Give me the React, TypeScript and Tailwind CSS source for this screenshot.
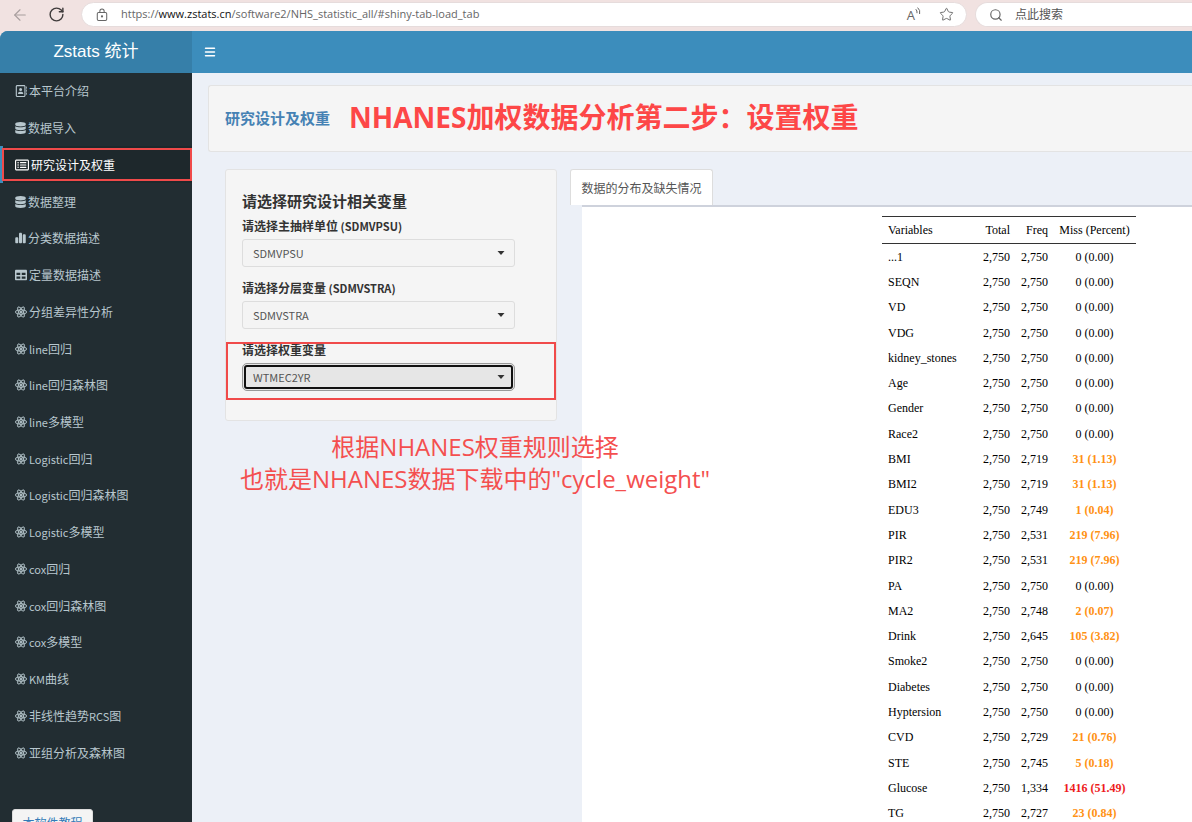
import type { ReactNode } from "react";
import { ArrowLeft, RotateCw, Search, Star } from "lucide-react";
import { FaDatabase, FaReact, FaTable } from "react-icons/fa";
import { FaBars, FaChartSimple, FaRegAddressBook, FaRegRectangleList } from "react-icons/fa6";
import { clsx } from "clsx";

const ATOM = <FaReact className="h-3 w-3" stroke="currentColor" strokeWidth={18} />;

const NAV_ITEMS: { name: string; icon: ReactNode; active?: boolean }[] = [
  { name: "本平台介绍", icon: <FaRegAddressBook className="h-3 w-3" /> },
  { name: "数据导入", icon: <FaDatabase className="h-3 w-[11px]" /> },
  { name: "研究设计及权重", icon: <FaRegRectangleList className="h-[14px] w-[14px]" />, active: true },
  { name: "数据整理", icon: <FaDatabase className="h-3 w-[11px]" /> },
  { name: "分类数据描述", icon: <FaChartSimple className="h-3 w-[11px]" /> },
  { name: "定量数据描述", icon: <FaTable className="h-3 w-3" /> },
  { name: "分组差异性分析", icon: ATOM },
  { name: "line回归", icon: ATOM },
  { name: "line回归森林图", icon: ATOM },
  { name: "line多模型", icon: ATOM },
  { name: "Logistic回归", icon: ATOM },
  { name: "Logistic回归森林图", icon: ATOM },
  { name: "Logistic多模型", icon: ATOM },
  { name: "cox回归", icon: ATOM },
  { name: "cox回归森林图", icon: ATOM },
  { name: "cox多模型", icon: ATOM },
  { name: "KM曲线", icon: ATOM },
  { name: "非线性趋势RCS图", icon: ATOM },
  { name: "亚组分析及森林图", icon: ATOM },
];

const ROWS = [
  ["...1", "2,750", "0 (0.00)"],
  ["SEQN", "2,750", "0 (0.00)"],
  ["VD", "2,750", "0 (0.00)"],
  ["VDG", "2,750", "0 (0.00)"],
  ["kidney_stones", "2,750", "0 (0.00)"],
  ["Age", "2,750", "0 (0.00)"],
  ["Gender", "2,750", "0 (0.00)"],
  ["Race2", "2,750", "0 (0.00)"],
  ["BMI", "2,719", "31 (1.13)"],
  ["BMI2", "2,719", "31 (1.13)"],
  ["EDU3", "2,749", "1 (0.04)"],
  ["PIR", "2,531", "219 (7.96)"],
  ["PIR2", "2,531", "219 (7.96)"],
  ["PA", "2,750", "0 (0.00)"],
  ["MA2", "2,748", "2 (0.07)"],
  ["Drink", "2,645", "105 (3.82)"],
  ["Smoke2", "2,750", "0 (0.00)"],
  ["Diabetes", "2,750", "0 (0.00)"],
  ["Hyptersion", "2,750", "0 (0.00)"],
  ["CVD", "2,729", "21 (0.76)"],
  ["STE", "2,745", "5 (0.18)"],
  ["Glucose", "1,334", "1416 (51.49)"],
  ["TG", "2,727", "23 (0.84)"],
];

function missClass(miss: string) {
  if (miss.startsWith("0 ")) return "";
  return miss.startsWith("1416") ? "font-bold text-[#ee1c1c]" : "font-bold text-[#ff9214]";
}

// latin runs are set smaller than the chinese around them
function MixedText({ text }: { text: string }) {
  return (
    <span>
      {text.split(/([\x20-\x7e]+)/).map((run, i) =>
        i % 2 ? (
          <span key={i} className="text-[11px]">
            {run}
          </span>
        ) : (
          run
        ),
      )}
    </span>
  );
}

function BrowserBar() {
  return (
    <div className="flex h-[31px] shrink-0 items-start gap-2 bg-[#f1e2e1] pt-[2px] font-['Open_Sans','Noto_Sans_CJK_SC',sans-serif] text-xs text-[#666]">
      <div className="flex h-[25px] w-[73px] items-center gap-[19px] pl-[11px]">
        <button aria-label="返回" className="text-[#a89e9e]">
          <ArrowLeft className="h-[18px] w-[18px]" strokeWidth={1.5} />
        </button>
        <button aria-label="刷新" className="text-[#3f3b3b]">
          <RotateCw className="h-[17px] w-[17px]" strokeWidth={2} />
        </button>
      </div>
      <div className="flex h-[25px] flex-1 items-center rounded-full border border-[#e6dcdc] bg-white pr-3 pl-[14px]">
        <svg viewBox="0 0 14 16" className="h-[14px] w-3" fill="none" stroke="#666" strokeWidth="1.2">
          <rect x="1.5" y="5" width="11" height="9.5" rx="1.5" />
          <path d="M4.5 5V3.5a2.5 2.5 0 0 1 5 0V5" />
          <circle cx="7" cy="9.7" r="0.7" fill="#666" />
        </svg>
        <span className="ml-[13px] flex-1 text-[11px] whitespace-nowrap">
          https://<span className="text-[#111]">www.zstats.cn</span>/software2/NHS_statistic_all/#shiny-tab-load_tab
        </span>
        <button aria-label="朗读此页内容" className="flex items-start">
          <span className="text-[13px] leading-4">A</span>
          <svg viewBox="0 0 6 8" className="h-2 w-[6px]" fill="none" stroke="#666">
            <path d="M0.8 2.2q1.6 1.6 1.2 4M2.6 0.6q3 2.6 2 6.4" />
          </svg>
        </button>
        <button aria-label="收藏" className="ml-[18px]">
          <Star className="h-[15px] w-[15px]" strokeWidth={1.5} />
        </button>
      </div>
      <label className="flex h-[25px] w-[217px] items-center gap-3 rounded-l-full border border-r-0 border-[#e6dcdc] bg-white pl-[13px]">
        <Search className="h-[14px] w-[14px] shrink-0" strokeWidth={2} />
        <input aria-label="搜索" placeholder="点此搜索" className="w-full outline-none placeholder:text-[#555]" />
      </label>
    </div>
  );
}

function Sidebar() {
  return (
    <nav className="w-48 shrink-0 bg-[#222d32] text-xs text-[#b8c7ce]">
      <ul className="flex h-[698px] flex-col">
        {NAV_ITEMS.map((item) => (
          <li key={item.name} className="relative flex-1">
            <a
              href="#shiny-tab-load_tab"
              className={clsx(
                "flex h-full items-center gap-[2px] border-l-[3px] pl-3 whitespace-nowrap",
                item.active ? "border-[#3c8dbc] bg-[#1e282c] text-white" : "border-transparent",
              )}
            >
              {item.icon}
              <MixedText text={item.name} />
            </a>
            {item.active && (
              <span className="pointer-events-none absolute inset-y-[2px] right-0 left-[2px] border-2 border-[#f04a4a]" />
            )}
          </li>
        ))}
      </ul>
      <button className="mt-[38px] ml-3 h-7 w-[81px] rounded-[3px] border border-[#ddd] bg-[#f4f4f4] text-[#337ab7]">
        本软件教程
      </button>
    </nav>
  );
}

function VariableSelect({ id, label, value, focused }: { id: string; label: string; value: string; focused?: boolean }) {
  return (
    <div>
      <label htmlFor={id} className="block h-[22px] text-xs leading-[18px] font-bold">
        <MixedText text={label} />
      </label>
      <div className="relative w-[273px]">
        <select
          id={id}
          className={clsx(
            "block h-7 w-full appearance-none border pl-[10px] text-[11px] text-[#555]",
            focused
              ? "rounded-[5px] border-[#999] bg-[#e6e6e6] outline-2 -outline-offset-4 outline-[#111]"
              : "rounded-[3px] border-[#ddd] bg-[#f4f4f4] outline-none",
          )}
        >
          <option>{value}</option>
        </select>
        <svg viewBox="0 0 8 4" className="pointer-events-none absolute top-3 right-[10px] h-1 w-2">
          <path d="M0.5 0h7L4 4z" fill="#333" />
        </svg>
      </div>
    </div>
  );
}

function DesignPanel() {
  return (
    <section className="relative h-[252px] w-[332px] shrink-0 rounded-[3px] border border-[#e3e3e3] bg-[#f5f5f5] px-4 pt-[19px]">
      <h4 className="mb-1 text-[15px] leading-6 font-bold">请选择研究设计相关变量</h4>
      <div className="flex flex-col gap-3">
        <VariableSelect id="psu" label="请选择主抽样单位 (SDMVPSU)" value="SDMVPSU" />
        <VariableSelect id="stra" label="请选择分层变量 (SDMVSTRA)" value="SDMVSTRA" />
        <VariableSelect id="weight" label="请选择权重变量" value="WTMEC2YR" focused />
      </div>
      <span className="pointer-events-none absolute inset-x-0 top-[172px] h-[58px] border-2 border-[#f04a4a]" />
      <p className="absolute top-[261px] left-[14px] text-center font-['Open_Sans','Noto_Sans_CJK_SC',sans-serif] text-2xl leading-8 whitespace-nowrap text-[#f44f4f]">
        根据NHANES权重规则选择
        <br />
        也就是NHANES数据下载中的"cycle_weight"
      </p>
    </section>
  );
}

function MissingTable() {
  return (
    <section className="flex min-w-0 flex-1 flex-col">
      <div className="flex">
        <button className="h-9 w-[143px] rounded-t-[3px] border border-b-0 border-[#ddd] bg-white text-xs whitespace-nowrap text-[#555]">
          数据的分布及缺失情况
        </button>
      </div>
      <div className="ml-3 flex flex-1 justify-end border-t-2 border-[#ced2dc] bg-white pt-[9px] pr-14">
        <table className="h-[610px] w-[254px] table-fixed border-collapse font-['Liberation_Serif',serif] text-xs text-black">
          <colgroup>
            <col className="w-[96px]" />
            <col className="w-[38px]" />
            <col className="w-[37px]" />
            <col className="w-[83px]" />
          </colgroup>
          <thead>
            <tr className="border-y border-[#333]">
              <th className="py-[5px] pl-[6px] text-left font-normal">Variables</th>
              <th className="pr-[6px] text-right font-normal">Total</th>
              <th className="pr-[5px] text-right font-normal">Freq</th>
              <th className="text-center font-normal whitespace-nowrap">Miss (Percent)</th>
            </tr>
          </thead>
          <tbody>
            {ROWS.map(([name, freq, miss]) => (
              <tr key={name}>
                <td className="py-1 pl-[6px]">{name}</td>
                <td className="pr-[6px] text-right">2,750</td>
                <td className="pr-[5px] text-right">{freq}</td>
                <td className={clsx("text-center", missClass(miss))}>{miss}</td>
              </tr>
            ))}
          </tbody>
        </table>
      </div>
    </section>
  );
}

export default function App() {
  return (
    <div className="flex h-screen flex-col overflow-hidden bg-[#f1e2e1] font-['Noto_Sans_CJK_SC',sans-serif] text-[#333]">
      <BrowserBar />
      <header className="flex h-[42px] shrink-0 overflow-hidden rounded-tl-lg bg-[#3c8dbc] text-white">
        <a
          href="#"
          className="flex w-48 items-center justify-center bg-[#367fa9] font-['Liberation_Sans','Noto_Sans_CJK_SC',sans-serif] text-[17px]"
        >
          Zstats 统计
        </a>
        <button aria-label="切换导航" className="px-3">
          <FaBars className="h-3 w-3" />
        </button>
      </header>
      <div className="flex min-h-0 flex-1">
        <Sidebar />
        <main className="flex min-w-0 flex-1 flex-col bg-[#ecf0f7] pt-3 pl-4">
          <div className="flex h-[67px] shrink-0 items-center gap-[19px] rounded-l-[3px] border border-r-0 border-[#e3e3e3] bg-[#f5f5f5] pl-4">
            <h2 className="text-[15px] font-bold text-[#4682b4]">研究设计及权重</h2>
            <p className="pb-1 font-['Open_Sans','Noto_Sans_CJK_SC',sans-serif] text-[28px] leading-10 font-bold whitespace-nowrap text-[#fd4747]">
              NHANES加权数据分析第二步：设置权重
            </p>
          </div>
          <div className="flex flex-1 gap-[13px] pt-[17px] pl-[17px]">
            <DesignPanel />
            <MissingTable />
          </div>
        </main>
      </div>
    </div>
  );
}
